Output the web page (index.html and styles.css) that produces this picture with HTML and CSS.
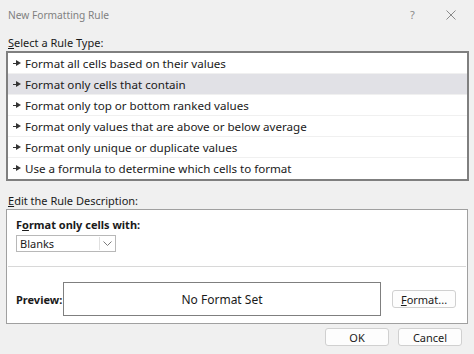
FILE: index.html
```html
<!DOCTYPE html>
<html>
<head>
<meta charset="utf-8">
<link rel="stylesheet" href="styles.css">
</head>
<body>
<div class="dialog">
  <div class="titlebar">
    <span class="title">New Formatting Rule</span>
    <span class="help">?</span>
    <span class="close">
      <svg width="10" height="10" viewBox="0 0 10 10"><path d="M0.5 0.5 L9.5 9.5 M9.5 0.5 L0.5 9.5" stroke="#8a8a8a" stroke-width="1" fill="none"/></svg>
    </span>
  </div>
  <div class="label"><u>S</u>elect a Rule Type:</div>
  <div class="listbox">
    <div class="row">Format all cells based on their values</div>
    <div class="row selected">Format only cells that contain</div>
    <div class="row">Format only top or bottom ranked values</div>
    <div class="row">Format only values that are above or below average</div>
    <div class="row">Format only unique or duplicate values</div>
    <div class="row">Use a formula to determine which cells to format</div>
  </div>
  <div class="label label2"><u>E</u>dit the Rule Description:</div>
  <div class="desc">
    <div class="top">
      <div class="bold">F<u>o</u>rmat only cells with:</div>
      <div class="combo">
        <span class="combo-text">Blanks</span>
        <span class="combo-btn">
          <svg width="9" height="5" viewBox="0 0 9 5"><path d="M0.5 0.5 L4.5 4.5 L8.5 0.5" stroke="#7a7a7a" stroke-width="1" fill="none"/></svg>
        </span>
      </div>
    </div>
    <div class="preview-row">
      <div class="bold preview-label">Preview:</div>
      <div class="preview-box">No Format Set</div>
      <button class="btn fmt"><u>F</u>ormat...</button>
    </div>
  </div>
  <div class="footer">
    <button class="btn ok">OK</button>
    <button class="btn cancel">Cancel</button>
  </div>
</div>
</body>
</html>
```
FILE: styles.css
```css
html, body {
  margin: 0;
  padding: 0;
  background: #f0f0f0;
}
body {
  width: 474px;
  height: 354px;
  overflow: hidden;
  font-family: "Noto Sans", "Open Sans", sans-serif;
  font-size: 11.6px;
  color: #1a1a1a;
}
.dialog {
  width: 474px;
  height: 354px;
  box-sizing: border-box;
  border-radius: 8px;
  background: #f0f0f0;
}
u { text-decoration: underline; text-underline-offset: 1px; }
.titlebar {
  height: 29px;
  display: flex;
  align-items: center;
  padding-left: 8px;
  color: #808080;
  font-size: 10.2px;
}
.title { flex: 1; }
.help { width: 14px; margin-right: 22px; color: #8a8a8a; font-size: 11px; }
.close { width: 10px; margin-right: 18px; display: flex; }
.label {
  padding-left: 8px;
  height: 14px;
  line-height: 14px;
  margin-top: 7px;
  font-size: 11px;
}
.listbox {
  margin: 1px 5px 0 6px;
  border: 2px solid #7f7f7f;
  background: #fff;
  height: 126px;
  box-sizing: content-box;
}
.row {
  height: 20px;
  line-height: 22px;
  border-bottom: 1px solid #f0f0f0;
  padding-left: 17px;
  position: relative;
}
.row::before {
  content: "";
  position: absolute;
  left: 5px;
  top: 10px;
  width: 4px;
  height: 1px;
  background: #333;
}
.row::after {
  content: "";
  position: absolute;
  left: 8px;
  top: 7px;
  border-left: 5px solid #333;
  border-top: 3.5px solid transparent;
  border-bottom: 3.5px solid transparent;
}
.row.selected { background: #e1e1e6; }
.row:last-child { border-bottom: none; }
.label2 { margin-top: 13px; }
.desc {
  margin: 1px 6px 0 6px;
  background: #fff;
  border: 1px solid #a0a0a0;
  height: 113px;
}
.top {
  padding: 7px 0 0 8px;
  height: 49px;
  border-bottom: 1px solid #d8d8d8;
  margin: 0 1px;
}
.bold { font-weight: bold; font-size: 11px; }
.combo {
  margin-top: 3px;
  width: 100px;
  height: 17px;
  border: 1px solid #b8b8b8;
  box-sizing: border-box;
  display: flex;
  align-items: center;
  background: #fff;
  font-size: 11px;
}
.combo-text { flex: 1; padding-left: 3px; line-height: 15px; }
.combo-btn {
  width: 14px;
  height: 13px;
  margin-right: 1px;
  border-left: 1px solid #e0e0e0;
  display: flex;
  align-items: center;
  justify-content: center;
}
.preview-row {
  display: flex;
  align-items: center;
  padding-left: 9px;
  margin-top: 15px;
}
.preview-label { width: 47px; }
.preview-box {
  width: 318px;
  height: 34px;
  border: 1px solid #7f7f7f;
  box-sizing: border-box;
  display: flex;
  align-items: center;
  justify-content: center;
  font-size: 12px;
  margin-right: 11px;
}
.btn {
  font-family: inherit;
  font-size: 11px;
  color: #1a1a1a;
  background: #fdfdfd;
  border: 1px solid #d0d0d0;
  border-radius: 3px;
  height: 18px;
  padding: 0;
  box-sizing: border-box;
}
.fmt { width: 64px; }
.footer {
  display: flex;
  justify-content: flex-end;
  gap: 9px;
  padding-right: 12px;
  margin-top: 4px;
}
.ok { width: 64px; }
.cancel { width: 64px; }
```
